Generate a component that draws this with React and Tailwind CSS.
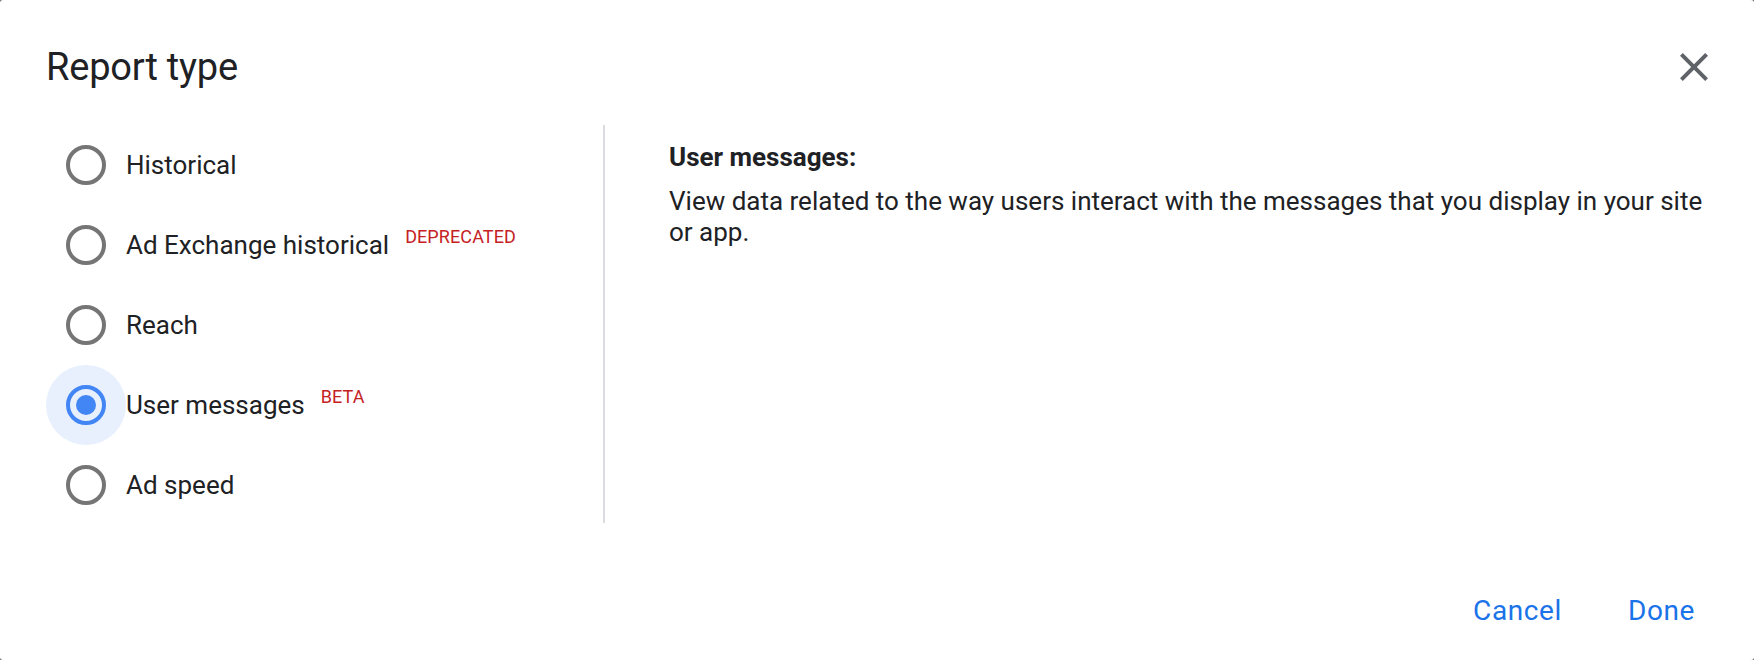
import React, { useState } from 'react';

const options = [
  { id: 'historical', label: 'Historical' },
  { id: 'adx', label: 'Ad Exchange historical', tag: 'DEPRECATED' },
  { id: 'reach', label: 'Reach' },
  { id: 'user', label: 'User messages', tag: 'BETA' },
  { id: 'speed', label: 'Ad speed' },
];

const descriptions = {
  user: {
    title: 'User messages:',
    body: 'View data related to the way users interact with the messages that you display in your site or app.',
  },
};

function Radio({ checked }) {
  return (
    <div className={`w-[80px] h-[80px] rounded-full flex items-center justify-center shrink-0 ${checked ? 'bg-[#e8f0fe]' : ''}`}>
      <div className={`w-[40px] h-[40px] rounded-full border-[4px] flex items-center justify-center ${checked ? 'border-[#4285f4]' : 'border-[#757575]'}`}>
        {checked && <div className="w-[20px] h-[20px] rounded-full bg-[#4285f4]" />}
      </div>
    </div>
  );
}

export default function App() {
  const [selected, setSelected] = useState('user');
  const desc = descriptions[selected] || descriptions.user;

  return (
    <div className="w-[1754px] h-[660px] bg-[#6b6b6b] font-['Roboto',sans-serif]">
      <div className="w-full h-full bg-white rounded-[3px] flex flex-col text-[#202124]">
        {/* Header */}
        <div className="flex items-center justify-between h-[86px] mt-[24px] pl-[46px] pr-[36px]">
          <h1 className="text-[38px] leading-none font-normal tracking-[-0.2px]">Report type</h1>
          <button className="w-[48px] h-[48px] flex items-center justify-center">
            <svg width="48" height="48" viewBox="0 0 24 24" fill="#5f6368">
              <path d="M19 6.41L17.59 5 12 10.59 6.41 5 5 6.41 10.59 12 5 17.59 6.41 19 12 13.41 17.59 19 19 17.59 13.41 12z" />
            </svg>
          </button>
        </div>

        {/* Body */}
        <div className="flex h-[398px] mt-[15px]">
          <div className="w-[603px] pl-[46px] flex flex-col">
            {options.map(o => (
              <div key={o.id} className="flex items-center h-[80px] cursor-pointer" onClick={() => setSelected(o.id)}>
                <Radio checked={selected === o.id} />
                <span className="text-[26px] leading-[32px]">{o.label}</span>
                {o.tag && (
                  <span className="ml-[16px] self-start mt-[22px] text-[18px] leading-[20px] text-[#c5221f] tracking-[0.1px]">{o.tag}</span>
                )}
              </div>
            ))}
          </div>
          <div className="w-[2px] bg-[#dadce0]" />
          <div className="flex-1 pl-[64px] pr-[40px] pt-[16px]">
            <p className="text-[26px] leading-[32px] font-bold">{desc.title}</p>
            <p className="mt-[13px] text-[26px] leading-[31px]">{desc.body}</p>
          </div>
        </div>

        {/* Footer */}
        <div className="flex justify-end items-start pt-[64px] pr-[43px] gap-[34px]">
          <button className="h-[48px] px-[16px] text-[28px] font-normal text-[#1a73e8] tracking-[0.6px]">Cancel</button>
          <button className="h-[48px] px-[16px] text-[28px] font-normal text-[#1a73e8] tracking-[0.6px]">Done</button>
        </div>
      </div>
    </div>
  );
}
